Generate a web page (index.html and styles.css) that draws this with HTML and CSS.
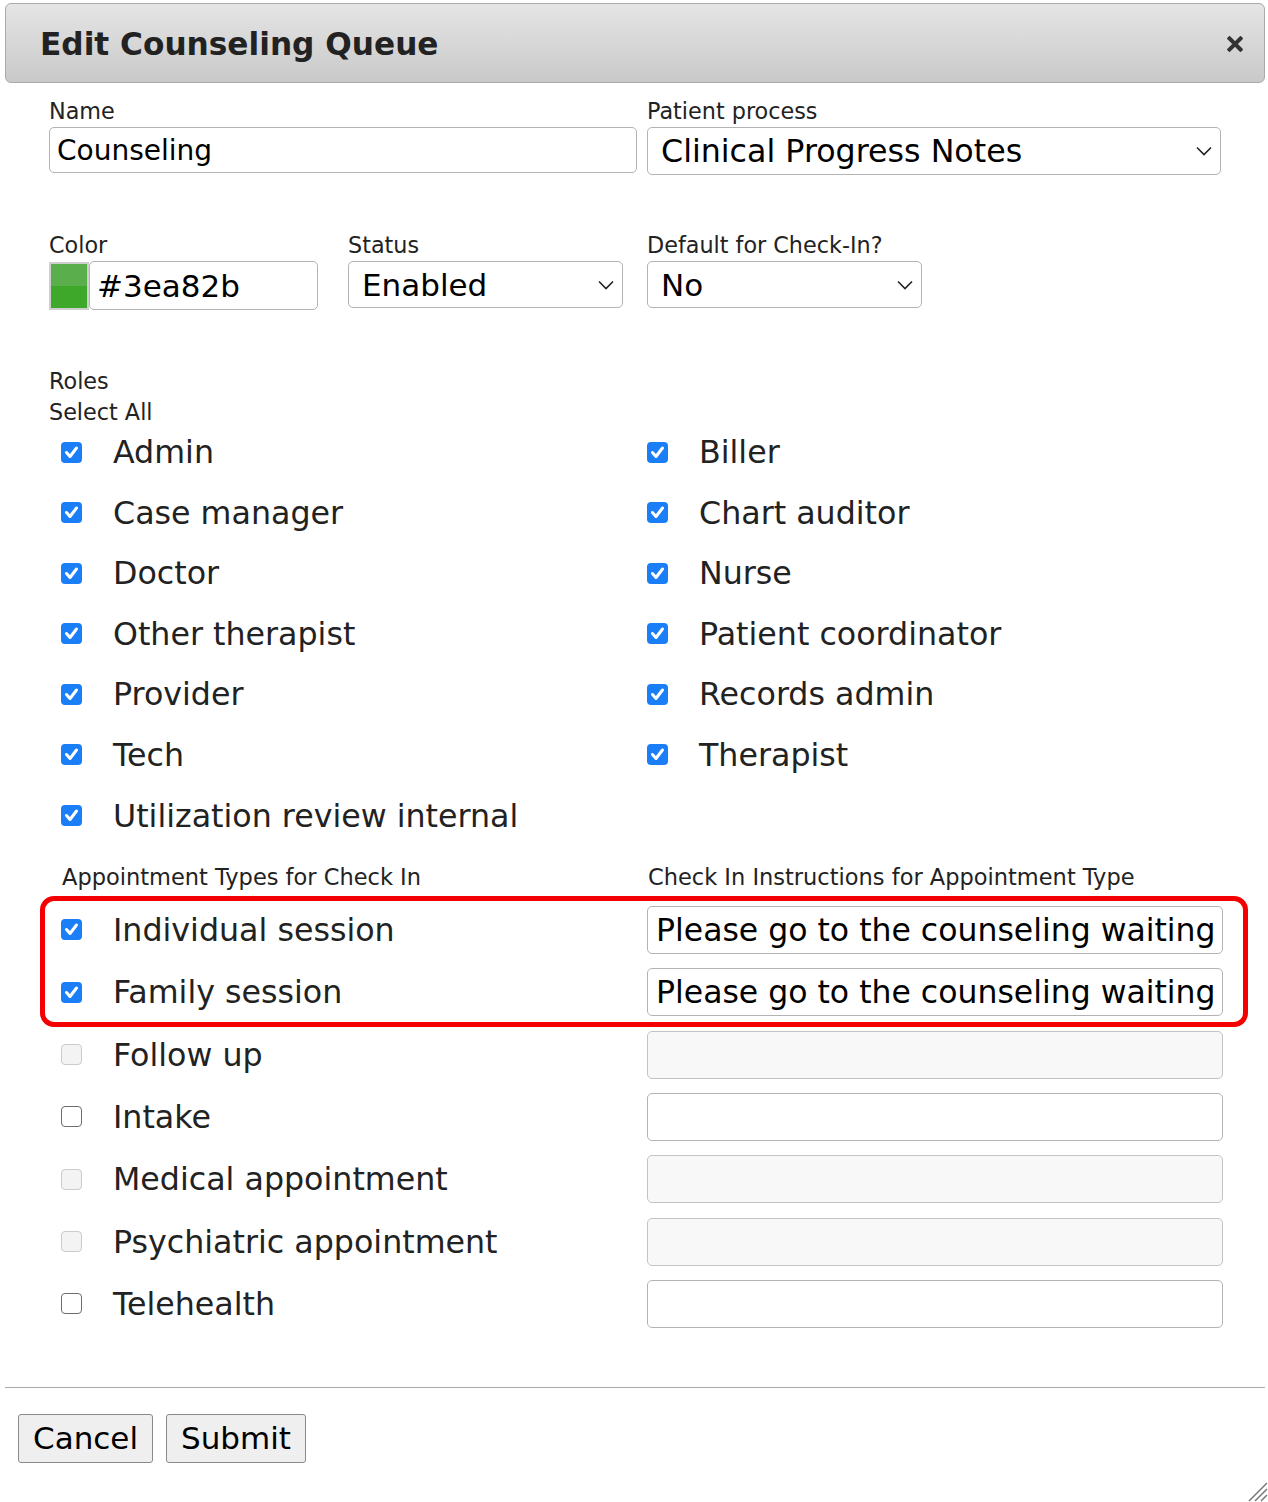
FILE: index.html
```html
<!DOCTYPE html>
<html lang="en">
<head>
<meta charset="utf-8">
<title>Edit Counseling Queue</title>
<link rel="stylesheet" href="styles.css">
</head>
<body>
<div class="dialog">
  <div class="titlebar">
    <span class="title">Edit Counseling Queue</span>
    <span class="close"><svg width="16" height="16" viewBox="0 0 16 16"><path d="M2.5 2.5 L13.5 13.5 M13.5 2.5 L2.5 13.5" stroke="#333" stroke-width="4" stroke-linecap="square"/></svg></span>
  </div>
  <div class="content">
    <div class="top-grid">
      <div class="field span2">
        <div class="label">Name</div>
        <div class="input name-input">Counseling</div>
      </div>
      <div class="field span2">
        <div class="label">Patient process</div>
        <div class="select process-select"><span>Clinical Progress Notes</span><svg class="chev" width="16" height="10" viewBox="0 0 16 10"><polyline points="1,1.5 8,8.5 15,1.5" fill="none" stroke="#222" stroke-width="1.6"/></svg></div>
      </div>
      <div class="field">
        <div class="label">Color</div>
        <div class="color-row">
          <span class="swatch"></span>
          <div class="input color-input">#3ea82b</div>
        </div>
      </div>
      <div class="field">
        <div class="label">Status</div>
        <div class="select small-select"><span>Enabled</span><svg class="chev" width="16" height="10" viewBox="0 0 16 10"><polyline points="1,1.5 8,8.5 15,1.5" fill="none" stroke="#222" stroke-width="1.6"/></svg></div>
      </div>
      <div class="field">
        <div class="label">Default for Check-In?</div>
        <div class="select small-select"><span>No</span><svg class="chev" width="16" height="10" viewBox="0 0 16 10"><polyline points="1,1.5 8,8.5 15,1.5" fill="none" stroke="#222" stroke-width="1.6"/></svg></div>
      </div>
    </div>

    <div class="roles-head">
      <div>Roles</div>
      <div>Select All</div>
    </div>
    <div class="roles-grid">
      <div class="check"><span class="cb on"><svg viewBox="0 0 21 21" width="21" height="21"><polyline points="5.5,10.5 9,14.5 15.5,6" fill="none" stroke="#fff" stroke-width="3" stroke-linecap="round" stroke-linejoin="round"/></svg></span><span class="cl">Admin</span></div>
      <div class="check"><span class="cb on"><svg viewBox="0 0 21 21" width="21" height="21"><polyline points="5.5,10.5 9,14.5 15.5,6" fill="none" stroke="#fff" stroke-width="3" stroke-linecap="round" stroke-linejoin="round"/></svg></span><span class="cl">Biller</span></div>
      <div class="check"><span class="cb on"><svg viewBox="0 0 21 21" width="21" height="21"><polyline points="5.5,10.5 9,14.5 15.5,6" fill="none" stroke="#fff" stroke-width="3" stroke-linecap="round" stroke-linejoin="round"/></svg></span><span class="cl">Case manager</span></div>
      <div class="check"><span class="cb on"><svg viewBox="0 0 21 21" width="21" height="21"><polyline points="5.5,10.5 9,14.5 15.5,6" fill="none" stroke="#fff" stroke-width="3" stroke-linecap="round" stroke-linejoin="round"/></svg></span><span class="cl">Chart auditor</span></div>
      <div class="check"><span class="cb on"><svg viewBox="0 0 21 21" width="21" height="21"><polyline points="5.5,10.5 9,14.5 15.5,6" fill="none" stroke="#fff" stroke-width="3" stroke-linecap="round" stroke-linejoin="round"/></svg></span><span class="cl">Doctor</span></div>
      <div class="check"><span class="cb on"><svg viewBox="0 0 21 21" width="21" height="21"><polyline points="5.5,10.5 9,14.5 15.5,6" fill="none" stroke="#fff" stroke-width="3" stroke-linecap="round" stroke-linejoin="round"/></svg></span><span class="cl">Nurse</span></div>
      <div class="check"><span class="cb on"><svg viewBox="0 0 21 21" width="21" height="21"><polyline points="5.5,10.5 9,14.5 15.5,6" fill="none" stroke="#fff" stroke-width="3" stroke-linecap="round" stroke-linejoin="round"/></svg></span><span class="cl">Other therapist</span></div>
      <div class="check"><span class="cb on"><svg viewBox="0 0 21 21" width="21" height="21"><polyline points="5.5,10.5 9,14.5 15.5,6" fill="none" stroke="#fff" stroke-width="3" stroke-linecap="round" stroke-linejoin="round"/></svg></span><span class="cl">Patient coordinator</span></div>
      <div class="check"><span class="cb on"><svg viewBox="0 0 21 21" width="21" height="21"><polyline points="5.5,10.5 9,14.5 15.5,6" fill="none" stroke="#fff" stroke-width="3" stroke-linecap="round" stroke-linejoin="round"/></svg></span><span class="cl">Provider</span></div>
      <div class="check"><span class="cb on"><svg viewBox="0 0 21 21" width="21" height="21"><polyline points="5.5,10.5 9,14.5 15.5,6" fill="none" stroke="#fff" stroke-width="3" stroke-linecap="round" stroke-linejoin="round"/></svg></span><span class="cl">Records admin</span></div>
      <div class="check"><span class="cb on"><svg viewBox="0 0 21 21" width="21" height="21"><polyline points="5.5,10.5 9,14.5 15.5,6" fill="none" stroke="#fff" stroke-width="3" stroke-linecap="round" stroke-linejoin="round"/></svg></span><span class="cl">Tech</span></div>
      <div class="check"><span class="cb on"><svg viewBox="0 0 21 21" width="21" height="21"><polyline points="5.5,10.5 9,14.5 15.5,6" fill="none" stroke="#fff" stroke-width="3" stroke-linecap="round" stroke-linejoin="round"/></svg></span><span class="cl">Therapist</span></div>
      <div class="check"><span class="cb on"><svg viewBox="0 0 21 21" width="21" height="21"><polyline points="5.5,10.5 9,14.5 15.5,6" fill="none" stroke="#fff" stroke-width="3" stroke-linecap="round" stroke-linejoin="round"/></svg></span><span class="cl">Utilization review internal</span></div>
    </div>

    <div class="appt-head">
      <div class="ah-left">Appointment Types for Check In</div>
      <div class="ah-right">Check In Instructions for Appointment Type</div>
    </div>
    <div class="appt-list">
      <div class="check"><span class="cb on"><svg viewBox="0 0 21 21" width="21" height="21"><polyline points="5.5,10.5 9,14.5 15.5,6" fill="none" stroke="#fff" stroke-width="3" stroke-linecap="round" stroke-linejoin="round"/></svg></span><span class="cl">Individual session</span></div>
      <div class="input instr">Please go to the counseling waiting</div>
      <div class="check"><span class="cb on"><svg viewBox="0 0 21 21" width="21" height="21"><polyline points="5.5,10.5 9,14.5 15.5,6" fill="none" stroke="#fff" stroke-width="3" stroke-linecap="round" stroke-linejoin="round"/></svg></span><span class="cl">Family session</span></div>
      <div class="input instr">Please go to the counseling waiting</div>
      <div class="check"><span class="cb disabled"></span><span class="cl">Follow up</span></div>
      <div class="input instr disabled"></div>
      <div class="check"><span class="cb off"></span><span class="cl">Intake</span></div>
      <div class="input instr"></div>
      <div class="check"><span class="cb disabled"></span><span class="cl">Medical appointment</span></div>
      <div class="input instr disabled"></div>
      <div class="check"><span class="cb disabled"></span><span class="cl">Psychiatric appointment</span></div>
      <div class="input instr disabled"></div>
      <div class="check"><span class="cb off"></span><span class="cl">Telehealth</span></div>
      <div class="input instr"></div>
      <div class="highlight"></div>
    </div>
  </div>
  <div class="buttonpane">
    <button class="btn">Cancel</button>
    <button class="btn">Submit</button>
  </div>
  <svg class="resize" width="22" height="22" viewBox="0 0 22 22"><path d="M21 3 L3 21 M21 9 L9 21 M21 15 L15 21" stroke="#777" stroke-width="1.5"/></svg>
</div>
</body>
</html>
```

FILE: styles.css
```css
html, body {
  margin: 0;
  padding: 0;
  background: #fff;
}

body {
  font-family: "DejaVu Sans", Verdana, sans-serif;
  color: #222;
  overflow: hidden;
}

.dialog {
  position: relative;
  margin: 3px 3px 0 5px;
}

.titlebar {
  height: 78px;
  box-sizing: content-box;
  border: 1px solid #aaa;
  border-radius: 6px;
  background: linear-gradient(#e5e5e5, #c9c9c9);
  display: flex;
  align-items: center;
  justify-content: space-between;
  padding: 0 21px 0 34px;
}

.title {
  font-weight: bold;
  font-size: 31.2px;
  color: #222;
  padding-top: 1px;
}

.close {
  display: flex;
  width: 16px;
  height: 16px;
  margin-top: 2px;
}

.content {
  padding: 15px 0 59px 44px;
}

.top-grid {
  display: grid;
  grid-template-columns: 299px 299px 299px 299px;
  row-gap: 57px;
  align-items: start;
}

.span2 {
  grid-column: span 2;
}

.label {
  font-size: 22.3px;
  line-height: 26px;
  margin-bottom: 3px;
  color: #222;
}

.input {
  box-sizing: border-box;
  border: 1px solid #b3b3b3;
  border-radius: 5px;
  background: #fff;
  color: #000;
  display: flex;
  align-items: center;
  padding-left: 8px;
  white-space: nowrap;
  overflow: hidden;
  font-size: 31.5px;
}

.name-input {
  width: 588px;
  height: 46px;
  font-size: 28px;
  padding-left: 7px;
}

.color-row {
  display: flex;
  align-items: flex-start;
}

.swatch {
  box-sizing: border-box;
  width: 40px;
  height: 48px;
  margin-top: 1px;
  border: 2px solid #cfcfcf;
  background: linear-gradient(#5aae4b 50%, #3ea82b 50%);
}

.color-input {
  width: 229px;
  height: 49px;
  font-size: 31px;
  padding-left: 7px;
}

.select {
  box-sizing: border-box;
  border: 1px solid #b3b3b3;
  border-radius: 5px;
  background: #fff;
  color: #000;
  display: flex;
  align-items: center;
  justify-content: space-between;
  padding: 0 8px 0 13px;
  font-size: 31px;
  white-space: nowrap;
}

.process-select {
  width: 574px;
  height: 48px;
  font-size: 31.7px;
}

.small-select {
  width: 275px;
  height: 47px;
}

.chev {
  flex: none;
}

.roles-head {
  margin-top: 56px;
  font-size: 22.3px;
  line-height: 31px;
}

.roles-grid {
  display: grid;
  grid-template-columns: 586px 1fr;
  grid-auto-rows: 48px;
  row-gap: 12.6px;
  padding-left: 12px;
}

.check {
  display: flex;
  align-items: center;
}

.cb {
  box-sizing: border-box;
  flex: none;
  width: 21px;
  height: 21px;
  border-radius: 4px;
  display: flex;
}

.cb.on {
  background: #1a7ef6;
}

.cb.off {
  border: 1.5px solid #6d6d6d;
  background: #fff;
}

.cb.disabled {
  border: 1.5px solid #cbcbcb;
  background: #f3f3f3;
}

.cl {
  margin-left: 31px;
  font-size: 31.7px;
  color: #222;
  white-space: nowrap;
}

.appt-head {
  margin-top: 24.8px;
  display: grid;
  grid-template-columns: 599px 1fr;
  font-size: 22.5px;
  line-height: 26px;
}

.ah-left {
  padding-left: 13px;
}

.appt-list {
  position: relative;
  margin-top: 15.6px;
  display: grid;
  grid-template-columns: 598px 576px;
  grid-auto-rows: 48px;
  row-gap: 14.33px;
}

.appt-list .check {
  padding-left: 12px;
}

.instr {
  width: 576px;
  height: 48px;
  padding-left: 8px;
}

.instr.disabled {
  background: #f8f8f8;
  border-color: #c3c3c3;
}

.highlight {
  position: absolute;
  box-sizing: border-box;
  top: -10px;
  left: -9px;
  width: 1208px;
  height: 131px;
  border: 5px solid #f50000;
  border-radius: 14px;
  pointer-events: none;
}

.buttonpane {
  border-top: 1px solid #aaa;
  padding: 26px 13px 39px;
  display: flex;
  gap: 13px;
}

.btn {
  box-sizing: border-box;
  height: 49px;
  padding: 0 14px;
  font-family: "DejaVu Sans", Verdana, sans-serif;
  font-size: 31px;
  color: #000;
  background: #efefef;
  border: 1px solid #8a8a8a;
  border-radius: 3px;
}

.resize {
  position: absolute;
  right: -3px;
  bottom: 0;
}
```
